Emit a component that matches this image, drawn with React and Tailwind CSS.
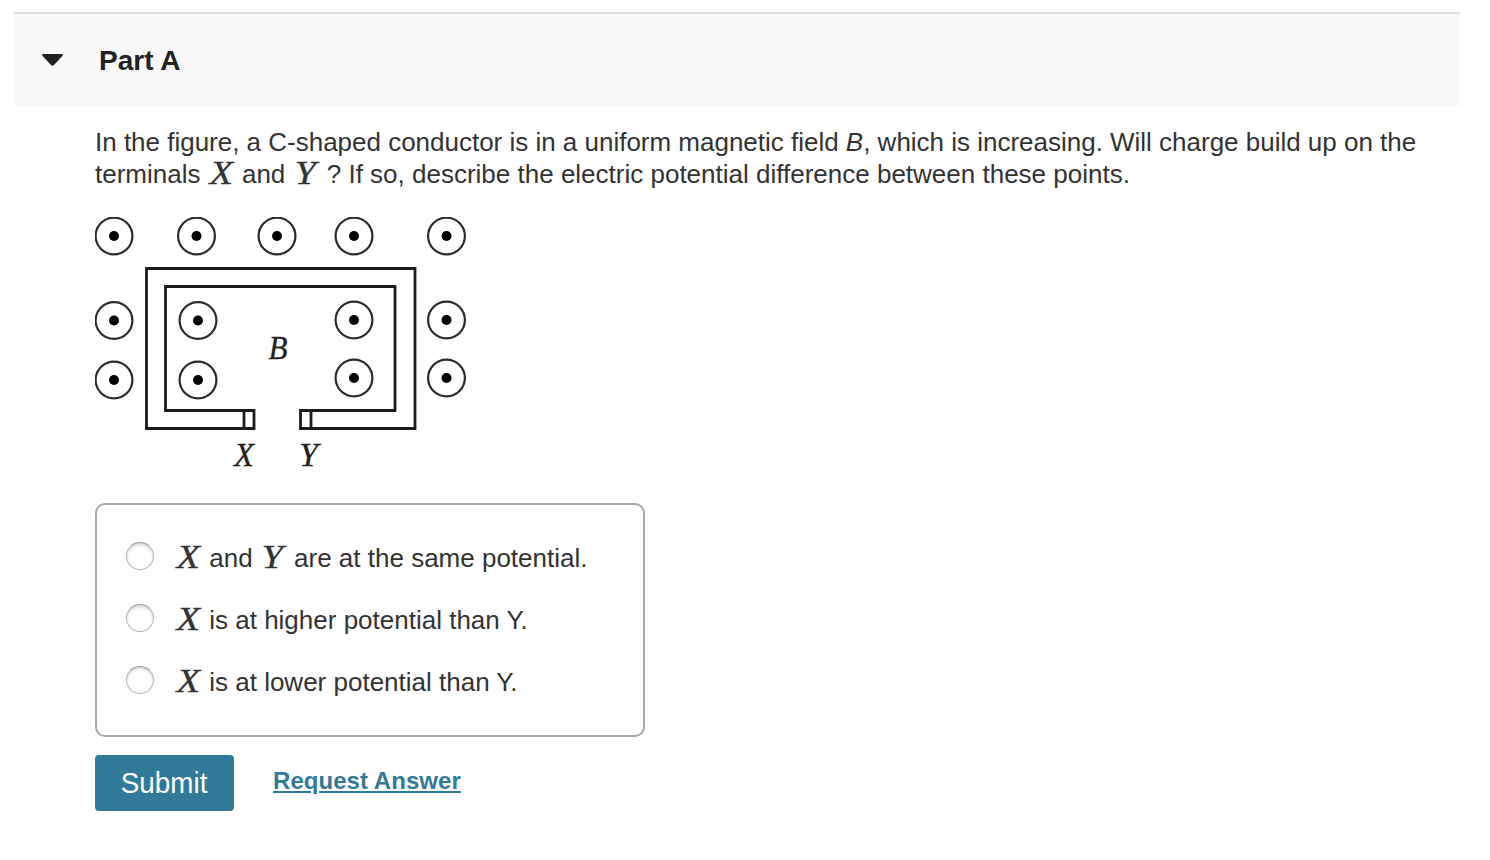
import React, { useState } from 'react';

// Champ magnétique sortant : centre de chaque symbole
const FIELD_POINTS = [
  [19, 19], [101.5, 19], [182, 19], [259, 19], [351.5, 19],
  [19, 103.5], [103, 103.5], [259, 103], [351.5, 103],
  [19, 163], [103, 163], [259, 161], [351.5, 161],
];

const MathVar = ({ children, className = '' }) => (
  <span className={`inline-block text-left whitespace-nowrap align-baseline font-['Liberation_Serif',serif] italic text-[33px] leading-6 ${className}`}>
    <span className="inline-block origin-left translate-x-[1.5px] translate-y-px scale-x-[1.17] [-webkit-text-stroke:0.3px_#333]">{children}</span>
  </span>
);

const ConductorFigure = () => (
  <svg width="376" height="264" viewBox="0 0 376 264" className="block">
    {FIELD_POINTS.map(([x, y]) => (
      <g key={`${x}-${y}`}>
        <circle cx={x} cy={y} r="18.4" fill="none" stroke="#2b2b2b" strokeWidth="2.2" />
        <circle cx={x} cy={y} r="5" fill="#000" />
      </g>
    ))}
    <g fill="none" stroke="#1c1c1c" strokeWidth="2.8">
      <path d="M159 193.5H70.5V69.5H300V193.5H205.5V211.5H320V51.5H51.5V211.5H159V192" />
      <path d="M149 193.5V211.5M216 193.5V211.5" />
    </g>
    <g fill="#222" stroke="#222" strokeWidth="0.3" fontFamily="Liberation Serif, serif" fontStyle="italic" fontSize="34">
      <text x="173.5" y="142" textLength="19" lengthAdjust="spacingAndGlyphs">B</text>
      <text x="139" y="249" textLength="20" lengthAdjust="spacingAndGlyphs">X</text>
      <text x="204" y="249" textLength="19" lengthAdjust="spacingAndGlyphs">Y</text>
    </g>
  </svg>
);

const Choice = ({ value, selected, onSelect, children }) => (
  <label className="flex h-[62px] cursor-pointer items-center">
    <input
      type="radio"
      name="answer"
      checked={selected === value}
      onChange={() => onSelect(value)}
      className="mr-[21px] mb-1 size-7 shrink-0 appearance-none rounded-full border border-[#b5b5b5] border-t-[#999] bg-white shadow-[inset_0_2px_3px_rgba(0,0,0,0.16)] checked:border-8 checked:border-[#327a9a]"
    />
    <span className="whitespace-nowrap">{children}</span>
  </label>
);

export default function App() {
  const [selected, setSelected] = useState(null);

  return (
    <div className="h-[860px] overflow-hidden bg-white pt-3 pr-[30px] pl-[14px] font-['Liberation_Sans',Arial,sans-serif] text-[26px] leading-8 text-[#333]">
      {/* EN-TÊTE */}
      <header className="flex h-[94px] items-center border-t-2 border-[#ddd] bg-[#f9f9f9] pl-7">
        <svg width="21" height="12" viewBox="0 0 21 12" className="mr-9">
          <path d="M1 0H20Q21.5 0.5 20.5 1.7L12 11Q10.5 12.5 9 11L0.5 1.7Q-0.5 0.5 1 0Z" fill="#222" />
        </svg>
        <h2 className="pt-0.5 text-[28px] font-bold text-[#222]">Part A</h2>
      </header>

      <main className="pt-5 pl-[81px]">
        {/* ÉNONCÉ */}
        <div className="whitespace-nowrap">
          <p className="h-8 tracking-[-0.01px]">
            In the figure, a C-shaped conductor is in a uniform magnetic field <em>B</em>, which is increasing. Will charge build up on the
          </p>
          <p className="h-8">
            terminals <MathVar className="w-[27px]">X</MathVar> and <MathVar className="w-[27px]">Y</MathVar> ? If so, describe the electric potential difference between these points.
          </p>
        </div>

        <div className="mt-[27px]">
          <ConductorFigure />
        </div>

        {/* RÉPONSES */}
        <div className="mt-[22px] h-[234px] w-[550px] rounded-[10px] border-2 border-[#a9a9a9] pt-[22px] pl-[29px]">
          <Choice value="same" selected={selected} onSelect={setSelected}>
            <MathVar className="w-[27px]">X</MathVar> and <MathVar className="w-[27px]">Y</MathVar> are at the same potential.
          </Choice>
          <Choice value="higher" selected={selected} onSelect={setSelected}>
            <MathVar className="w-[27px]">X</MathVar> is at higher potential than Y.
          </Choice>
          <Choice value="lower" selected={selected} onSelect={setSelected}>
            <MathVar className="w-[27px]">X</MathVar> is at lower potential than Y.
          </Choice>
        </div>

        <div className="mt-[18px] flex items-center">
          <button className="h-14 w-[139px] rounded bg-[#327a9a] text-[29px] text-white">
            <span className="inline-block scale-x-[0.96]">Submit</span>
          </button>
          <a href="#" className="mb-1 ml-[39px] text-[24px] font-bold tracking-[0.05px] text-[#327a9a] underline decoration-2 underline-offset-2">
            Request Answer
          </a>
        </div>
      </main>
    </div>
  );
}
